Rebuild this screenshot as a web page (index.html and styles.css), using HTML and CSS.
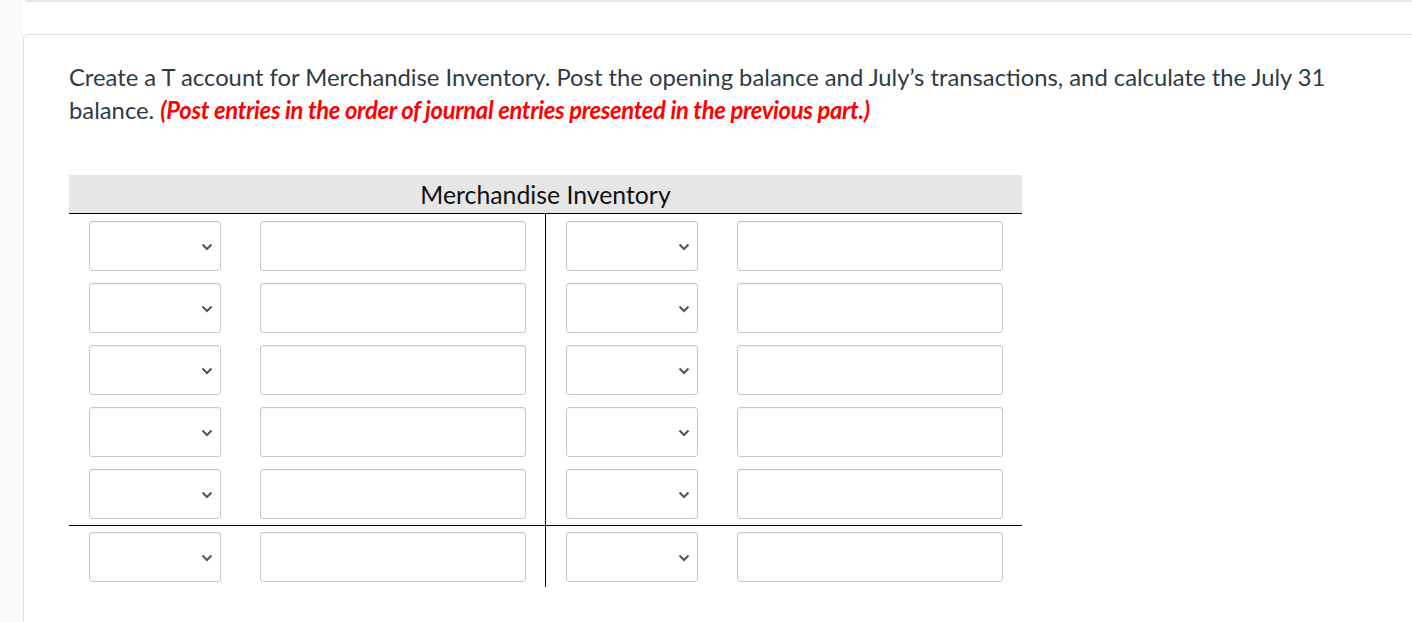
FILE: index.html
```html
<!DOCTYPE html>
<html lang="en">
<head>
<meta charset="utf-8">
<title>T account</title>
<link rel="stylesheet" href="styles.css">
</head>
<body>
<div class="layout">
  <div class="rail"></div>
  <div class="main">
    <div class="topbar"></div>
    <div class="card">
      <p class="prompt">Create a T account for Merchandise Inventory. Post the opening balance and July’s transactions, and calculate the July 31 balance. <em class="note">(Post entries in the order of journal entries presented in the previous part.)</em></p>
      <div class="taccount">
        <div class="taccount-title">Merchandise Inventory</div>
        <div class="section section-entries">
          <div class="side side-left">
            <div class="row"><div class="select"><svg class="chev" width="12" height="8" viewBox="0 0 12 8"><path d="M1.5 1.5 L6 6 L10.5 1.5" fill="none" stroke="#555" stroke-width="2"/></svg></div><div class="input"></div></div>
            <div class="row"><div class="select"><svg class="chev" width="12" height="8" viewBox="0 0 12 8"><path d="M1.5 1.5 L6 6 L10.5 1.5" fill="none" stroke="#555" stroke-width="2"/></svg></div><div class="input"></div></div>
            <div class="row"><div class="select"><svg class="chev" width="12" height="8" viewBox="0 0 12 8"><path d="M1.5 1.5 L6 6 L10.5 1.5" fill="none" stroke="#555" stroke-width="2"/></svg></div><div class="input"></div></div>
            <div class="row"><div class="select"><svg class="chev" width="12" height="8" viewBox="0 0 12 8"><path d="M1.5 1.5 L6 6 L10.5 1.5" fill="none" stroke="#555" stroke-width="2"/></svg></div><div class="input"></div></div>
            <div class="row"><div class="select"><svg class="chev" width="12" height="8" viewBox="0 0 12 8"><path d="M1.5 1.5 L6 6 L10.5 1.5" fill="none" stroke="#555" stroke-width="2"/></svg></div><div class="input"></div></div>
          </div>
          <div class="side side-right">
            <div class="row"><div class="select"><svg class="chev" width="12" height="8" viewBox="0 0 12 8"><path d="M1.5 1.5 L6 6 L10.5 1.5" fill="none" stroke="#555" stroke-width="2"/></svg></div><div class="input"></div></div>
            <div class="row"><div class="select"><svg class="chev" width="12" height="8" viewBox="0 0 12 8"><path d="M1.5 1.5 L6 6 L10.5 1.5" fill="none" stroke="#555" stroke-width="2"/></svg></div><div class="input"></div></div>
            <div class="row"><div class="select"><svg class="chev" width="12" height="8" viewBox="0 0 12 8"><path d="M1.5 1.5 L6 6 L10.5 1.5" fill="none" stroke="#555" stroke-width="2"/></svg></div><div class="input"></div></div>
            <div class="row"><div class="select"><svg class="chev" width="12" height="8" viewBox="0 0 12 8"><path d="M1.5 1.5 L6 6 L10.5 1.5" fill="none" stroke="#555" stroke-width="2"/></svg></div><div class="input"></div></div>
            <div class="row"><div class="select"><svg class="chev" width="12" height="8" viewBox="0 0 12 8"><path d="M1.5 1.5 L6 6 L10.5 1.5" fill="none" stroke="#555" stroke-width="2"/></svg></div><div class="input"></div></div>
          </div>
        </div>
        <div class="section section-total">
          <div class="side side-left">
            <div class="row"><div class="select"><svg class="chev" width="12" height="8" viewBox="0 0 12 8"><path d="M1.5 1.5 L6 6 L10.5 1.5" fill="none" stroke="#555" stroke-width="2"/></svg></div><div class="input"></div></div>
          </div>
          <div class="side side-right">
            <div class="row"><div class="select"><svg class="chev" width="12" height="8" viewBox="0 0 12 8"><path d="M1.5 1.5 L6 6 L10.5 1.5" fill="none" stroke="#555" stroke-width="2"/></svg></div><div class="input"></div></div>
          </div>
        </div>
      </div>
    </div>
  </div>
</div>
</body>
</html>
```

FILE: styles.css
```css
html, body {
  margin: 0;
  padding: 0;
  height: 100%;
}

body {
  font-family: Lato, "Open Sans", "Liberation Sans", sans-serif;
  background: #fafafa;
  color: #2d3b45;
  overflow: hidden;
}

.layout {
  display: flex;
  min-height: 100%;
}

.rail {
  width: 23px;
  flex: none;
  background: #fafafa;
}

.main {
  flex: 1;
  background: #ffffff;
  display: flex;
  flex-direction: column;
}

.topbar {
  height: 1px;
  margin-left: 2px;
  border-bottom: 1px solid #e2e2e2;
  border-bottom-left-radius: 4px;
  background: #ececec;
}

.card {
  margin-top: 32px;
  flex: 1;
  border: 1px solid #dddddd;
  border-right: none;
  border-bottom: none;
  border-top-left-radius: 5px;
  padding: 26px 0 0 45px;
}

.prompt {
  margin: 0;
  width: 1300px;
  font-size: 23.8px;
  line-height: 33px;
}

.note {
  color: #ff0000;
  font-weight: 700;
  font-style: italic;
  letter-spacing: -0.33px;
}

.taccount {
  width: 953px;
  margin-top: 48px;
}

.taccount-title {
  height: 38px;
  background: #e6e6e6;
  border-bottom: 1px solid #000;
  display: flex;
  align-items: center;
  justify-content: center;
  font-size: 24.8px;
  color: #111;
}

.section {
  display: flex;
}

.section-entries {
  border-bottom: 1px solid #000;
}

.side {
  width: 476px;
  padding-left: 20px;
  box-sizing: border-box;
  display: flex;
  flex-direction: column;
  gap: 12px;
}

.side-left {
  border-right: 1px solid #000;
  width: 477px;
}

.section-entries .side {
  padding-top: 7px;
  padding-bottom: 6px;
}

.section-total .side {
  padding-top: 6px;
  padding-bottom: 5px;
}

.row {
  display: flex;
  gap: 39px;
}

.select,
.input {
  height: 50px;
  box-sizing: border-box;
  border: 1px solid #c8c8c8;
  border-radius: 3px;
  background: #fff;
  box-shadow: inset 0 1px 1px rgba(0, 0, 0, 0.06);
}

.select {
  width: 132px;
  display: flex;
  align-items: center;
  justify-content: flex-end;
  padding-right: 7px;
}

.chev {
  display: block;
  margin-top: 1px;
}

.input {
  width: 266px;
}
```
